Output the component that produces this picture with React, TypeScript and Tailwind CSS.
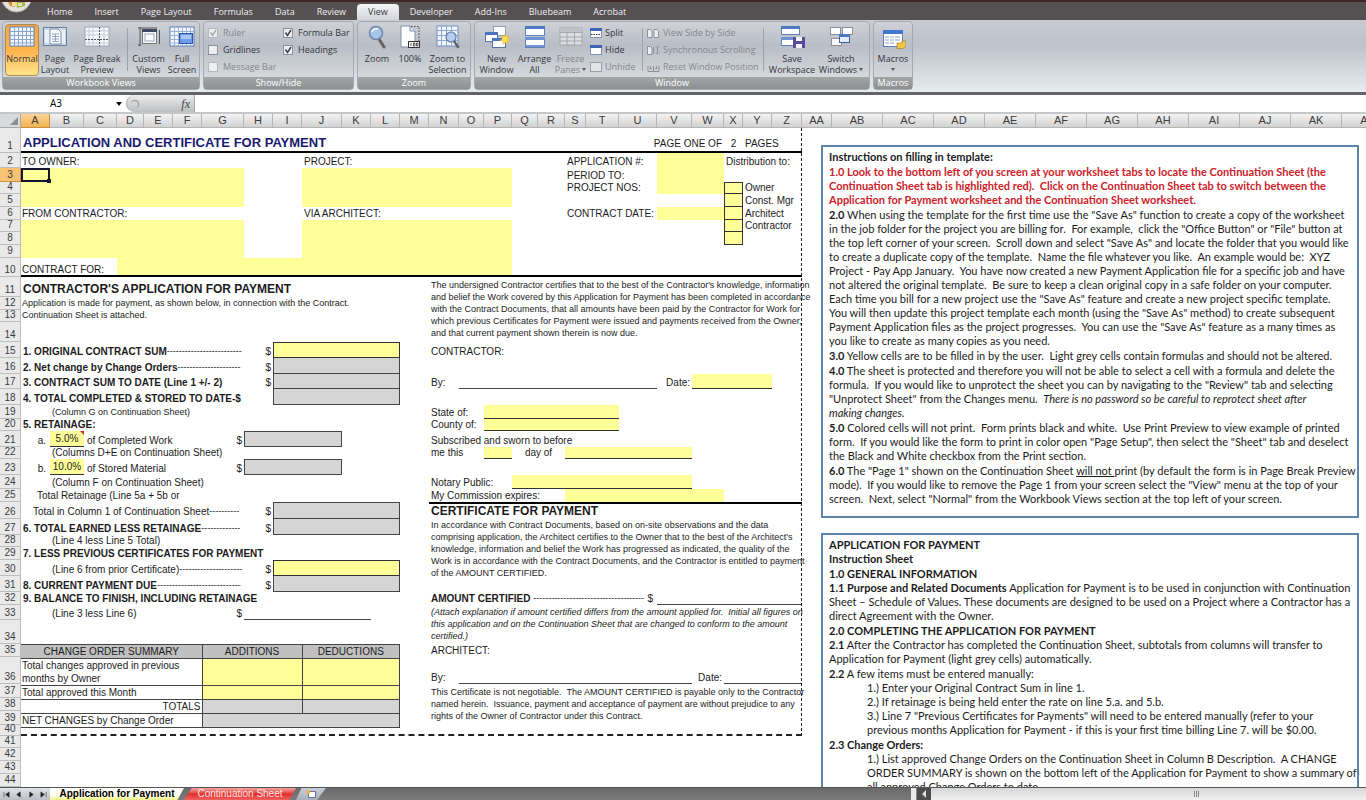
import React, { useState } from "react";

const COLUMNS: [string, number][] = [
  ["A", 29], ["B", 34], ["C", 33], ["D", 27], ["E", 29], ["F", 29], ["G", 42], ["H", 29], ["I", 29],
  ["J", 40], ["K", 29], ["L", 29], ["M", 29], ["N", 30], ["O", 25], ["P", 28], ["Q", 26], ["R", 27],
  ["S", 21], ["T", 33], ["U", 38], ["V", 35], ["W", 32], ["X", 19], ["Y", 29], ["Z", 30], ["AA", 30],
  ["AB", 51], ["AC", 51], ["AD", 51], ["AE", 51], ["AF", 51], ["AG", 51], ["AH", 51], ["AI", 51],
  ["AJ", 51], ["AK", 51], ["AL", 51],
];

const ROWS = [
  25, 15, 14, 12, 13, 13, 12, 13, 13, 19, 20, 13, 12, 20, 16, 16, 15, 16, 14, 12, 16, 12, 16, 14, 13,
  17, 16, 12, 13, 16, 16, 13, 15, 24, 13, 27, 14, 13, 14, 11, 12, 13, 13, 13,
];

// "A3:G5" -> grid lines, +2 because of the heading row and column
const area = (ref: string) => {
  const [from, to = from] = ref.split(":");
  const col = (s: string) => COLUMNS.findIndex(([name]) => name === s.replace(/\d/g, "")) + 2;
  const row = (s: string) => Number(s.replace(/\D/g, "")) + 1;
  return { gridColumn: `${col(from)} / ${col(to) + 1}`, gridRow: `${row(from)} / ${row(to) + 1}` };
};

const Cell = ({ at, className = "", children }: any) => (
  <div style={area(at)} className={`flex items-end whitespace-pre leading-[13px] ${className}`}>
    {children}
  </div>
);

// yellow cells, filled in by the user
const Field = ({ at, label, value = "", className = "" }: any) => (
  <input
    aria-label={label}
    defaultValue={value}
    style={area(at)}
    className={`h-full w-full min-w-0 border-[#333] bg-[#ffff99] text-center outline-none ${className}`}
  />
);

const Lines = ({ text }: any) =>
  text.split("\n").map((line: any, i: any) => (
    <React.Fragment key={i}>
      {i > 0 && <br />}
      {line}
    </React.Fragment>
  ));

const Note = ({ at, className = "", lines }: any) => (
  <p style={area(at)} className={`whitespace-pre pl-0.5 text-[9px] leading-3 ${className}`}>
    <Lines text={lines.join("\n")} />
  </p>
);

const Dashes = ({ count }: any) => <span className="text-[9px] font-normal">{"-".repeat(count)}</span>;

/* ---------- ribbon icons ---------- */

const Svg = ({ children, className = "h-6 w-[26px]" }: any) => (
  <svg viewBox="0 0 26 24" className={className} fill="none" aria-hidden="true">
    {children}
  </svg>
);

const GridIcon = () => (
  <Svg>
    <rect x="1" y="2" width="24" height="19" fill="#f4f8ff" stroke="#5b7fb5" />
    <path d="M5.5 2v19M9.5 2v19M13.5 2v19M17.5 2v19M21.5 2v19M1 6.5h24M1 10.5h24M1 14.5h24M1 18h24" stroke="#8aa5cf" />
  </Svg>
);

const PageLayoutIcon = () => (
  <Svg>
    <rect x="1.5" y="2.5" width="23" height="18" fill="#c9d9ee" stroke="#6d7f99" />
    <path d="M3 5h20v13H3z" fill="#e9f0f8" />
    <path d="M8 4h8l3 3v12H8z" fill="#fff" stroke="#7b8ca5" />
    <path d="M10 9h7M10 11.500h7M10 14h7M10 16.500h7M13.500 9v8" stroke="#8ea6c6" />
  </Svg>
);

const PageBreakIcon = () => (
  <Svg>
    <rect x="1" y="2" width="24" height="19" fill="#f7f9fc" stroke="#9aa5b5" />
    <path d="M5 2v19M9 2v19M20 2v19M1 6h24M1 10h24M1 18h24" stroke="#c3cddb" />
    <path d="M15.500 2v19M1 14.500h24" stroke="#555" strokeDasharray="2 1" />
  </Svg>
);

const CustomViewsIcon = () => (
  <Svg>
    <path d="M2 3h19M4 2v19M2 20h3M23.500 5v14" stroke="#555" />
    <rect x="6.500" y="6.500" width="14" height="12" fill="#f5f7fa" stroke="#777" />
    <path d="M6 4h15v3H6z" fill="#3d4a5c" />
    <rect x="9" y="9" width="9" height="7" fill="#fff" stroke="#9aa7b8" />
  </Svg>
);

const FullScreenIcon = () => (
  <Svg>
    <rect x="1" y="2" width="24" height="19" fill="#f4f8ff" stroke="#5b7fb5" />
    <path d="M5.500 2v19M9.500 2v19M13.500 2v19M17.500 2v19M21.500 2v19M1 6.500h24M1 10.500h24M1 14.500h24M1 18h24" stroke="#9db3d6" />
    <rect x="10.500" y="8.500" width="13" height="10" fill="#6f9ce6" stroke="#2f55a4" />
    <path d="M12 10h10v4H12z" fill="#a9c6f5" />
  </Svg>
);

const ZoomIcon = () => (
  <Svg>
    <path d="M15 14l5 8" stroke="#6d625c" strokeWidth="3" strokeLinecap="round" />
    <circle cx="12" cy="8" r="6.500" fill="#a9c4ea" stroke="#7186a8" strokeWidth="1.500" />
    <path d="M8 7a4.500 4.500 0 0 1 6-3" stroke="#fff" strokeWidth="1.500" />
  </Svg>
);

const HundredIcon = () => (
  <Svg>
    <path d="M4 1h9l5 5v16H4z" fill="#fff" stroke="#8292ab" />
    <path d="M13 1v5h5" stroke="#8292ab" fill="#dbe5f3" />
    <path d="M14 1.500h8v15" stroke="#444" strokeDasharray="1.500 1.500" />
    <rect x="11.500" y="16.500" width="11" height="6" fill="#fff" stroke="#333" />
    <path d="M14 18v3M16.500 18v3h1.500v-3zM19.500 18v3h1.500v-3z" stroke="#333" strokeWidth=".8" />
  </Svg>
);

const ZoomSelectionIcon = () => (
  <Svg>
    <rect x="2" y="1" width="21" height="20" fill="#f0f5fd" stroke="#6f8dbd" />
    <path d="M6.500 1v20M11.500 1v20M16.500 1v20M2 5.500h21M2 10.500h21M2 15.500h21" stroke="#8fa9d1" />
    <path d="M19 16l4 6" stroke="#5d6470" strokeWidth="2.500" strokeLinecap="round" />
    <circle cx="16" cy="12" r="5" fill="#b6cdf0" stroke="#637ba3" strokeWidth="1.200" />
  </Svg>
);

const NewWindowIcon = () => (
  <Svg>
    <rect x="9.500" y="1.500" width="12" height="9" fill="#fff" stroke="#8f9fb8" />
    <rect x="1.500" y="7.500" width="12" height="9" fill="#fff" stroke="#5673a8" />
    <path d="M1 7h13v3H1z" fill="#4c74bd" />
    <rect x="8.500" y="13.500" width="13" height="9" fill="#fff" stroke="#5673a8" />
    <path d="M8 13h14v3H8z" fill="#4c74bd" />
    <path d="M21 9l1 3 3-1-1.500 3L26 15.500 23 16l.5 3-2.500-2-2 2.500V16l-3-.5 2.500-1.500L17 11l3 1z" fill="#ffe14a" stroke="#e0b520" strokeWidth=".5" />
  </Svg>
);

const ArrangeIcon = () => (
  <Svg>
    <rect x="3.500" y="1.500" width="19" height="9" fill="#fff" stroke="#5f81b9" />
    <path d="M3 1h20v3H3z" fill="#4f78c2" />
    <rect x="3.500" y="12.500" width="19" height="10" fill="#fff" stroke="#5f81b9" />
    <path d="M3 12h20v3H3zM3 20h20v2H3z" fill="#6d93d4" />
  </Svg>
);

const FreezeIcon = () => (
  <Svg>
    <rect x="2" y="3" width="22" height="17" fill="#dcdee1" stroke="#a4a7ad" />
    <path d="M2 7.500h22M2 12h22M2 16h22M9 3v17M16.500 3v17" stroke="#a4a7ad" />
    <path d="M2 3h22v4H2z" fill="#bfc2c7" />
  </Svg>
);

const SaveWorkspaceIcon = () => (
  <Svg>
    <rect x="2.500" y="1.500" width="18" height="8" fill="#fff" stroke="#5f81b9" />
    <path d="M2 1h19v3H2z" fill="#4f78c2" />
    <rect x="2.500" y="12.500" width="18" height="8" fill="#fff" stroke="#5f81b9" />
    <path d="M2 12h19v3H2z" fill="#6d93d4" />
    <rect x="14" y="12" width="12" height="11" fill="#5a4b9c" />
    <path d="M17 12h6v4h-6zM17 19h6v4h-6z" fill="#f3f2fa" />
  </Svg>
);

const SwitchIcon = () => (
  <Svg>
    <rect x="2.500" y="2.500" width="10" height="7" fill="#fff" stroke="#8a8f98" />
    <rect x="14.500" y="2.500" width="10" height="7" fill="#fff" stroke="#8a8f98" />
    <rect x="3.500" y="13.500" width="10" height="7" fill="#fff" stroke="#8a8f98" />
    <rect x="11.500" y="9.500" width="10" height="8" fill="#e4edfb" stroke="#3f5f9f" />
    <path d="M11 9h11v3H11z" fill="#4f78c2" />
  </Svg>
);

const MacrosIcon = () => (
  <Svg>
    <rect x="3.500" y="5.500" width="19" height="16" fill="#fff" stroke="#5f81b9" />
    <path d="M3 5h20v4H3z" fill="#4176d3" />
    <path d="M5 12h4M10 12h4M15 12h5M5 15h4M10 15h4M15 15h5M5 18h4M10 18h4" stroke="#8ba3c7" />
    <path d="M17 18h5v-2h4v5l-3 2.500h-6z" fill="#efc64a" stroke="#a8811d" strokeWidth=".7" />
  </Svg>
);

const PaneIcon = ({ kind }: any) => (
  <svg viewBox="0 0 12 10" className="h-2.5 w-3 shrink-0" fill="none" aria-hidden="true">
    <rect x=".5" y=".5" width="11" height="9" fill={kind === "unhide" ? "#e1e3e6" : "#fff"} stroke={kind === "unhide" ? "#999da5" : "#7f95bd"} />
    {kind !== "unhide" && <path d="M0 0h12v3H0z" fill="#3c66b5" />}
    {kind === "split" && <path d="M1 6.500h10" stroke="#333" strokeDasharray="1.500 1" />}
  </svg>
);

const PairIcon = ({ kind }: any) => (
  <svg viewBox="0 0 13 10" className="h-2.5 w-[13px] shrink-0" fill="none" stroke="#8f9299" aria-hidden="true">
    {kind === "reset" ? (
      <path d="M1 4v5.500h11V4M6.500 4v5.500M2.500 6.500h2.500M8 6.500h2.500M3.500 4v3M9.500 4v3" />
    ) : (
      <>
        <path d="M.5 1.500h3l1.500 1.500v6.500H.5z" fill="#eceded" />
        <path d={kind === "sync" ? "M10.500 1v8M9 2.500l1.500-1.500L12 2.500M9 7.500l1.500 1.500L12 7.500M6.500 2v7" : "M7 1.500h3l1.500 1.500v6.500H7z"} fill="#eceded" />
      </>
    )}
  </svg>
);

/* ---------- ribbon ---------- */

const RibbonGroup = ({ title, children, className = "" }: any) => (
  <section
    aria-label={title}
    className={`flex flex-col rounded-sm border border-[#a5a9af] bg-linear-to-b from-[#ced1d7] via-[#b9bdc6] via-35% to-[#dfe4e5] ${className}`}
  >
    <div className="flex h-[55px] px-0.5">{children}</div>
    <div className="h-3 bg-linear-to-b from-[#a3a6a7] to-[#8e9192] text-center leading-[11px] text-white">{title}</div>
  </section>
);

const BigButton = ({ icon, lines, className = "", active, disabled, arrow }: any) => (
  <button
    disabled={disabled}
    className={`mt-0.5 flex h-[52px] shrink-0 flex-col items-center whitespace-nowrap rounded-sm border leading-[11px] ${
      active ? "border-[#b08a4e] bg-linear-to-b from-[#f0a94d] via-[#ffb34d] to-[#ffe48a]" : "border-transparent"
    } ${disabled ? "text-[#85888e]" : ""} ${className}`}
  >
    <span className="mb-1">{icon}</span>
    {lines.map((line: any, i: any) => (
      <span key={line} className="flex items-center gap-0.5">
        {line}
        {arrow && i === lines.length - 1 && lines.length > 1 && <Arrow />}
      </span>
    ))}
    {arrow && lines.length === 1 && <span className="pt-1"><Arrow /></span>}
  </button>
);

const Arrow = () => (
  <svg viewBox="0 0 4 3" className="h-[3px] w-1" aria-hidden="true">
    <path d="M0 0h4L2 3z" fill="#555" />
  </svg>
);

const CheckItem = ({ label, checked, disabled }: any) => {
  const [on, setOn] = useState(!!checked);
  return (
    <label className={`flex h-[17px] items-center gap-[5px] whitespace-nowrap ${disabled ? "text-[#85888e]" : ""}`}>
      <span className="grid size-2.5">
        <input
          type="checkbox"
          checked={on}
          disabled={disabled}
          onChange={() => setOn(!on)}
          className="col-start-1 row-start-1 size-2.5 appearance-none border border-[#8d9199] bg-[#eceeef] disabled:border-[#b3b6bb]"
        />
        {on && (
          <svg viewBox="0 0 10 10" className="pointer-events-none col-start-1 row-start-1 size-2.5" fill="none" aria-hidden="true">
            <path d="M2.500 4.500l2 3L8 2" stroke={disabled ? "#a6a9ae" : "#333b4d"} strokeWidth="1.400" />
          </svg>
        )}
      </span>
      {label}
    </label>
  );
};

const SmallButton = ({ icon, label, disabled }: any) => (
  <button disabled={disabled} className={`flex h-[17px] items-center gap-[3px] whitespace-nowrap ${disabled ? "text-[#85888e]" : ""}`}>
    {icon}
    {label}
  </button>
);

const Separator = () => <div className="mx-1 my-1.5 w-px shrink-0 bg-[#9da1a8]" />;

const TABS = ["Home", "Insert", "Page Layout", "Formulas", "Data", "Review", "View", "Developer", "Add-Ins", "Bluebeam", "Acrobat"];

const Ribbon = () => (
  <header className="shrink-0 font-['Open_Sans',sans-serif] text-[9px] text-[#33363c]">
    <nav className="flex h-5 border-t-2 border-[#452426] bg-[#555153]">
      <svg viewBox="0 0 36 18" className="h-[18px] w-9 shrink-0" aria-hidden="true">
        <circle cx="16.500" cy="-5" r="15" fill="#e4e2dc" stroke="#b6b3ad" />
        <path d="M8 0h7v5l-5-1z" fill="#e08a3c" />
        <path d="M16 -2h9v6l-8 2z" fill="#a3b84a" />
        <path d="M12 0h5v4h-5z" fill="#f0dba0" />
        <path d="M18 1h4v3h-4z" fill="#dfe8a8" />
      </svg>
      {TABS.map((tab) => (
        <button
          key={tab}
          className={`mt-0.5 px-[11px] ${tab === "View" ? "rounded-t-sm bg-linear-to-b from-[#f4f5f6] to-[#d2d5da]" : "text-[#eeeeee]"}`}
        >
          {tab}
        </button>
      ))}
    </nav>
    <div className="flex gap-[3px] border-b-[3px] border-[#626466] bg-linear-to-b from-[#c6cad1] via-[#bec2cb] via-35% to-[#e6eded] px-0.5 pb-0.5 pt-px">
      <RibbonGroup title="Workbook Views" className="w-[198px]">
        <BigButton active icon={<GridIcon />} lines={["Normal"]} className="w-[34px]" />
        <BigButton icon={<PageLayoutIcon />} lines={["Page", "Layout"]} className="w-[32px]" />
        <BigButton icon={<PageBreakIcon />} lines={["Page Break", "Preview"]} className="w-[52px]" />
        <Separator />
        <BigButton icon={<CustomViewsIcon />} lines={["Custom", "Views"]} className="w-[33px]" />
        <BigButton icon={<FullScreenIcon />} lines={["Full", "Screen"]} className="w-[34px]" />
      </RibbonGroup>
      <RibbonGroup title="Show/Hide" className="w-[151px]">
        <div className="grid grid-cols-[75px_auto] content-start pl-0.5 pt-0.5">
          <CheckItem label="Ruler" checked disabled />
          <CheckItem label="Formula Bar" checked />
          <CheckItem label="Gridlines" />
          <CheckItem label="Headings" checked />
          <CheckItem label="Message Bar" disabled />
        </div>
      </RibbonGroup>
      <RibbonGroup title="Zoom" className="w-[114px]">
        <BigButton icon={<ZoomIcon />} lines={["Zoom"]} className="w-[34px]" />
        <BigButton icon={<HundredIcon />} lines={["100%"]} className="w-[32px]" />
        <BigButton icon={<ZoomSelectionIcon />} lines={["Zoom to", "Selection"]} className="w-[43px]" />
      </RibbonGroup>
      <RibbonGroup title="Window" className="w-[396px]">
        <BigButton icon={<NewWindowIcon />} lines={["New", "Window"]} className="w-[39px]" />
        <BigButton icon={<ArrangeIcon />} lines={["Arrange", "All"]} className="w-[37px]" />
        <BigButton icon={<FreezeIcon />} lines={["Freeze", "Panes"]} className="w-[35px]" disabled arrow />
        <div className="w-[50px] shrink-0 pl-0.5 pt-0.5">
          <SmallButton icon={<PaneIcon kind="split" />} label="Split" />
          <SmallButton icon={<PaneIcon kind="hide" />} label="Hide" />
          <SmallButton icon={<PaneIcon kind="unhide" />} label="Unhide" disabled />
        </div>
        <Separator />
        <div className="w-[112px] shrink-0 pt-0.5">
          <SmallButton icon={<PairIcon kind="side" />} label="View Side by Side" disabled />
          <SmallButton icon={<PairIcon kind="sync" />} label="Synchronous Scrolling" disabled />
          <SmallButton icon={<PairIcon kind="reset" />} label="Reset Window Position" disabled />
        </div>
        <Separator />
        <BigButton icon={<SaveWorkspaceIcon />} lines={["Save", "Workspace"]} className="w-[48px]" />
        <BigButton icon={<SwitchIcon />} lines={["Switch", "Windows"]} className="w-[50px]" arrow />
      </RibbonGroup>
      <RibbonGroup title="Macros" className="w-10">
        <BigButton icon={<MacrosIcon />} lines={["Macros"]} className="w-[34px]" arrow />
      </RibbonGroup>
    </div>
  </header>
);

const FormulaBar = () => (
  <div className="flex h-[19px] shrink-0 items-stretch border-b-2 border-[#c6c7c9] bg-white font-['Open_Sans',sans-serif] text-[10px]">
    <input aria-label="Name Box" defaultValue="A3" className="w-28 text-center outline-none" />
    <button aria-label="Names" className="flex w-3.5 items-center justify-center">
      <svg viewBox="0 0 6 4" className="h-1 w-1.5" aria-hidden="true"><path d="M0 0h6L3 4z" fill="#111" /></svg>
    </button>
    <div className="flex w-[69px] items-center justify-between rounded-l-full border-l border-r border-[#a5a7aa] bg-linear-to-b from-[#ececec] to-[#bcbec0] px-1">
      <span className="size-2 rounded-full border-r border-t border-[#8d9093]" />
      <button aria-label="Insert Function" className="font-['Liberation_Serif',serif] text-[12px] italic leading-none text-[#444]">
        fx
      </button>
    </div>
    <input aria-label="Formula" className="min-w-0 flex-1 outline-none" />
  </div>
);

/* ---------- sheet ---------- */

const GREY = "border border-[#444] bg-[#d5d5d5]";

const amountRows = [
  { row: 16, text: "2. Net change by Change Orders", dashes: 21 },
  { row: 17, text: "3. CONTRACT SUM TO DATE (Line 1 +/- 2)", dashes: 0 },
];

const PaymentForm = () => (
  <>
    <Cell at="A1:U1" className="border-b-2 border-black pb-0.5 pl-0.5 text-[13px] font-bold text-[#191970]">
      APPLICATION AND CERTIFICATE FOR PAYMENT
    </Cell>
    <Cell at="U1:W1" className="justify-end border-b-2 border-black pb-px pr-0.5">PAGE ONE OF</Cell>
    <Cell at="X1" className="justify-center border-b-2 border-black pb-px">2</Cell>
    <Cell at="Y1:Z1" className="border-b-2 border-black pb-px pl-0.5">PAGES</Cell>

    <Cell at="A2:G2" className="pl-px">TO OWNER:</Cell>
    <Cell at="J2:P2" className="pl-0.5">PROJECT:</Cell>
    <Field at="A3:G5" label="Owner" />
    <Field at="J3:P5" label="Project" />
    <Cell at="A6:G6" className="pl-px">FROM CONTRACTOR:</Cell>
    <Cell at="J6:P6" className="pl-0.5">VIA ARCHITECT:</Cell>
    <Field at="A7:G9" label="From contractor" />
    <Field at="J7:P9" label="Via architect" />
    <Cell at="A10:C10" className="pb-px pl-px">CONTRACT FOR:</Cell>
    <Field at="D10:P10" label="Contract for" />
    <Cell at="A10:Z10" className="pointer-events-none border-b-2 border-black" />

    <Cell at="S2:U2" className="pl-0.5">APPLICATION #:</Cell>
    <Cell at="S3:U3" className="pl-0.5">PERIOD TO:</Cell>
    <Cell at="S4:U4" className="pl-0.5">PROJECT NOS:</Cell>
    <Cell at="S6:U6" className="pl-0.5">CONTRACT DATE:</Cell>
    <Field at="V2:W2" label="Application number" />
    <Field at="V3:W3" label="Period to" />
    <Field at="V4:W4" label="Project numbers" />
    <Field at="V6:W6" label="Contract date" />
    <Cell at="X2:Z2" className="pl-0.5">Distribution to:</Cell>
    <Field at="X4" label="Owner copy" className="border" />
    <Field at="X5" label="Construction manager copy" className="border border-t-0" />
    <Field at="X6" label="Architect copy" className="border border-t-0" />
    <Field at="X7" label="Contractor copy" className="border border-t-0" />
    <Field at="X8" label="Other copy" className="border border-t-0" />
    <Cell at="Y4:Z4" className="pl-0.5">Owner</Cell>
    <Cell at="Y5:Z5" className="pl-0.5">Const. Mgr</Cell>
    <Cell at="Y6:Z6" className="pl-0.5">Architect</Cell>
    <Cell at="Y7:Z7" className="pl-0.5">Contractor</Cell>

    {/* left half */}
    <Cell at="A11:L11" className="pb-px pl-0.5 text-[12px] font-bold">CONTRACTOR'S APPLICATION FOR PAYMENT</Cell>
    <Cell at="A12:L12" className="pl-px text-[9px]">Application is made for payment, as shown below, in connection with the Contract.</Cell>
    <Cell at="A13:L13" className="pl-px text-[9px]">Continuation Sheet is attached.</Cell>

    <Cell at="A15:G15" className="pl-0.5 font-bold">1. ORIGINAL CONTRACT SUM<Dashes count={25} /></Cell>
    <Cell at="H15" className="justify-end pr-0.5">$</Cell>
    <Field at="I15:L15" label="Original contract sum" className="border" />
    {amountRows.map(({ row, text, dashes }) => (
      <React.Fragment key={row}>
        <Cell at={`A${row}:G${row}`} className="pl-0.5 font-bold">{text}<Dashes count={dashes} /></Cell>
        <Cell at={`H${row}`} className="justify-end pr-0.5">$</Cell>
        <Cell at={`I${row}:L${row}`} className={`${GREY} border-t-0`} />
      </React.Fragment>
    ))}
    <Cell at="A18:H18" className="pl-0.5 font-bold">4. TOTAL COMPLETED &amp; STORED TO DATE-$</Cell>
    <Cell at="I18:L18" className={`${GREY} border-t-0`} />
    <Cell at="B19:G19" className="pl-0.5 text-[9px]">(Column G on Continuation Sheet)</Cell>
    <Cell at="A20:G20" className="pl-0.5 font-bold">5. RETAINAGE:</Cell>

    <Cell at="A21" className="justify-end pr-1">a.</Cell>
    <Field at="B21" label="Completed work rate" value="5.0%" className="border-b" />
    <Cell at="B21" className="pointer-events-none items-start justify-end">
      <span className="mb-auto size-1 bg-[#c8321e] [clip-path:polygon(0_0,100%_0,100%_100%)]" />
    </Cell>
    <Cell at="C21:F21" className="pl-[3px]">of Completed Work</Cell>
    <Cell at="G21" className="justify-end pr-0.5">$</Cell>
    <Cell at="H21:J21" className={GREY} />
    <Cell at="B22:G22" className="pl-0.5">(Columns D+E on Continuation Sheet)</Cell>
    <Cell at="A23" className="justify-end pr-1">b.</Cell>
    <Field at="B23" label="Stored material rate" value="10.0%" className="border-b" />
    <Cell at="C23:F23" className="pl-[3px]">of Stored Material</Cell>
    <Cell at="G23" className="justify-end pr-0.5">$</Cell>
    <Cell at="H23:J23" className={GREY} />
    <Cell at="B24:G24" className="pl-0.5">(Column F on Continuation Sheet)</Cell>
    <Cell at="A25:G25" className="pl-4">Total Retainage (Line 5a + 5b or</Cell>
    <Cell at="A26:G26" className="pb-px pl-3">Total in Column 1 of Continuation Sheet<Dashes count={10} /></Cell>
    <Cell at="H26" className="justify-end pb-px pr-0.5">$</Cell>
    <Cell at="I26:L26" className={GREY} />
    <Cell at="A27:G27" className="pl-0.5 font-bold">6. TOTAL EARNED LESS RETAINAGE<Dashes count={13} /></Cell>
    <Cell at="H27" className="justify-end pr-0.5">$</Cell>
    <Cell at="I27:L27" className={`${GREY} border-t-0`} />
    <Cell at="B28:G28" className="pl-0.5">(Line 4 less Line 5 Total)</Cell>
    <Cell at="A29:L29" className="pl-0.5 font-bold">7. LESS PREVIOUS CERTIFICATES FOR PAYMENT</Cell>
    <Cell at="B30:G30" className="pl-0.5">(Line 6 from prior Certificate)<Dashes count={21} /></Cell>
    <Cell at="H30" className="justify-end pr-0.5">$</Cell>
    <Field at="I30:L30" label="Previous certificates" className="border" />
    <Cell at="A31:G31" className="pl-0.5 font-bold">8. CURRENT PAYMENT DUE<Dashes count={28} /></Cell>
    <Cell at="H31" className="justify-end pr-0.5">$</Cell>
    <Cell at="I31:L31" className={`${GREY} border-t-0`} />
    <Cell at="A32:L32" className="pl-0.5 font-bold">9. BALANCE TO FINISH, INCLUDING RETAINAGE</Cell>
    <Cell at="B33:F33" className="pl-0.5">(Line 3 less Line 6)</Cell>
    <Cell at="G33" className="justify-end pr-0.5">$</Cell>
    <Cell at="H33:K33" className="border-b border-[#444]" />

    <table style={area("A35:L39")} className="h-full w-full table-fixed border-collapse leading-[13px]">
      <colgroup>
        <col className="w-[181px]" />
        <col className="w-[100px]" />
        <col />
      </colgroup>
      <thead>
        <tr className="h-[13px] bg-[#c0c0c0] [&>th]:border [&>th]:border-[#444] [&>th]:p-0 [&>th]:font-normal">
          <th className="border-l-0!">CHANGE ORDER SUMMARY</th>
          <th>ADDITIONS</th>
          <th>DEDUCTIONS</th>
        </tr>
      </thead>
      <tbody className="[&_td]:border [&_td]:border-[#444] [&_td]:p-0">
        <tr className="h-[27px]">
          <td className="border-l-0! pl-px!">Total changes approved in previous<br />months by Owner</td>
          <td className="bg-[#ffff99]" />
          <td className="bg-[#ffff99]" />
        </tr>
        <tr className="h-[14px]">
          <td className="border-l-0! pl-px!">Total approved this Month</td>
          <td className="bg-[#ffff99]" />
          <td className="bg-[#ffff99]" />
        </tr>
        <tr className="h-[13px]">
          <td className="border-l-0! pr-px! text-right">TOTALS</td>
          <td className="bg-[#d5d5d5]" />
          <td className="bg-[#d5d5d5]" />
        </tr>
        <tr className="h-[14px]">
          <td className="border-l-0! pl-px!">NET CHANGES by Change Order</td>
          <td colSpan={2} className="bg-[#d5d5d5]" />
        </tr>
      </tbody>
    </table>

    {/* right half */}
    <Note
      at="N11:Z14"
      className="pt-0.5"
      lines={[
        "The undersigned Contractor certifies that to the best of the Contractor's knowledge, information",
        "and belief the Work covered by this Application for Payment has been completed in accordance",
        "with the Contract Documents, that all amounts have been paid by the Contractor for Work for",
        "which previous Certificates for Payment were issued and payments received from the Owner,",
        "and that current payment shown therein is now due.",
      ]}
    />
    <Cell at="N15:R15" className="pl-0.5">CONTRACTOR:</Cell>
    <Cell at="N17" className="pl-0.5">By:</Cell>
    <Cell at="O17:U17" className="border-b border-[#444]" />
    <Cell at="U17:V17" className="justify-end pr-0.5">Date:</Cell>
    <Field at="W17:Y17" label="Contractor date" className="border-b" />
    <Cell at="N19:O19" className="pl-0.5">State of:</Cell>
    <Field at="P19:T19" label="State" className="border-b" />
    <Cell at="N20:O20" className="pl-0.5">County of:</Cell>
    <Field at="P20:T20" label="County" className="border-b" />
    <Cell at="N21:U21" className="pl-0.5">Subscribed and sworn to before</Cell>
    <Cell at="N22:O22" className="pl-0.5">me this</Cell>
    <Field at="P22" label="Day" className="border-b" />
    <Cell at="Q22:R22" className="justify-center">day of</Cell>
    <Field at="S22:V22" label="Month" className="border-b" />
    <Cell at="N24:P24" className="pl-0.5">Notary Public:</Cell>
    <Field at="Q24:V24" label="Notary public" className="border-b" />
    <Cell at="N25:R25" className="pl-0.5">My Commission expires:</Cell>
    <Field at="S25:W25" label="Commission expires" />
    <Cell at="N26:Z26" className="border-t-2 border-black pb-px pl-0.5 text-[12px] font-bold">CERTIFICATE FOR PAYMENT</Cell>
    <Note
      at="N27:Z31"
      lines={[
        "In accordance with Contract Documents, based on on-site observations and the data",
        "comprising application, the Architect certifies to the Owner that to the best of the Architect's",
        "knowledge, information and belief the Work has progressed as indicated, the quality of the",
        "Work is in accordance with the Contract Documents, and the Contractor is entitled to payment",
        "of the AMOUNT CERTIFIED.",
      ]}
    />
    <Cell at="N32:T32" className="pl-0.5 font-bold">AMOUNT CERTIFIED <Dashes count={37} /></Cell>
    <Cell at="U32" className="justify-end pr-1">$</Cell>
    <Cell at="V32:Z32" className="border-b border-[#444]" />
    <Note
      at="N33:Z34"
      className="pt-px italic"
      lines={[
        "(Attach explanation if amount certified differs from the amount applied for.  Initial all figures on",
        "this application and on the Continuation Sheet that are changed to conform to the amount",
        "certified.)",
      ]}
    />
    <Cell at="N35:R35" className="pl-0.5">ARCHITECT:</Cell>
    <Cell at="N36" className="pl-0.5">By:</Cell>
    <Cell at="O36:V36" className="border-b border-[#444]" />
    <Cell at="W36" className="justify-end pr-0.5">Date:</Cell>
    <Cell at="X36:Z36" className="border-b border-[#444]" />
    <Note
      at="N37:Z40"
      className="pt-0.5"
      lines={[
        "This Certificate is not negotiable.  The AMOUNT CERTIFIED is payable only to the Contractor",
        "named herein.  Issuance, payment and acceptance of payment are without prejudice to any",
        "rights of the Owner of Contractor under this Contract.",
      ]}
    />

    {/* print area */}
    <Cell at="A1:Z40" className="pointer-events-none border-b-2 border-r border-dashed border-[#222]" />
    {/* active cell */}
    <Cell at="A3" className="pointer-events-none relative border-2 border-[#15152e]">
      <span className="absolute -bottom-[3px] -right-[3px] size-1 bg-[#15152e]" />
    </Cell>
  </>
);

const Instructions = () => (
  <div style={area("AA1:AL44")} className="flex flex-col gap-[15px] overflow-hidden pl-[19px] pt-[17px] font-['Lato',sans-serif] text-[11px] leading-[14px]">
    <section className="w-[538px] shrink-0 space-y-px whitespace-pre border-2 border-[#5b85a9] bg-white pb-2.5 pl-1.5 pt-[3px]">
      <h2 className="font-bold">Instructions on filling in template:</h2>
      <p className="font-bold text-[#cc2229]">
        <Lines
          text={`1.0 Look to the bottom left of you screen at your worksheet tabs to locate the Continuation Sheet (the
Continuation Sheet tab is highlighted red).  Click on the Continuation Sheet tab to switch between the
Application for Payment worksheet and the Continuation Sheet worksheet.`}
        />
      </p>
      <p>
        <b>2.0</b>
        <Lines
          text={` When using the template for the first time use the "Save As" function to create a copy of the worksheet
in the job folder for the project you are billing for.  For example,  click the "Office Button" or "File" button at
the top left corner of your screen.  Scroll down and select "Save As" and locate the folder that you would like
to create a duplicate copy of the template.  Name the file whatever you like.  An example would be:  XYZ
Project - Pay App January.  You have now created a new Payment Application file for a specific job and have
not altered the original template.  Be sure to keep a clean original copy in a safe folder on your computer.
Each time you bill for a new project use the "Save As" feature and create a new project specific template.
You will then update this project template each month (using the "Save As" method) to create subsequent
Payment Application files as the project progresses.  You can use the "Save As" feature as a many times as
you like to create as many copies as you need.`}
        />
      </p>
      <p>
        <b>3.0</b>
        {` Yellow cells are to be filled in by the user.  Light grey cells contain formulas and should not be altered.`}
      </p>
      <p>
        <b>4.0</b>
        <Lines
          text={` The sheet is protected and therefore you will not be able to select a cell with a formula and delete the
formula.  If you would like to unprotect the sheet you can by navigating to the "Review" tab and selecting
"Unprotect Sheet" from the Changes menu.  `}
        />
        <i>
          <Lines text={`There is no password so be careful to reprotect sheet after
making changes.`} />
        </i>
      </p>
      <p>
        <b>5.0</b>
        <Lines
          text={` Colored cells will not print.  Form prints black and white.  Use Print Preview to view example of printed
form.  If you would like the form to print in color open "Page Setup", then select the "Sheet" tab and deselect
the Black and White checkbox from the Print section.`}
        />
      </p>
      <p>
        <b>6.0</b>
        {` The "Page 1" shown on the Continuation Sheet `}
        <u>will not </u>
        <Lines
          text={`print (by default the form is in Page Break Preview
mode).  If you would like to remove the Page 1 from your screen select the "View" menu at the top of your
screen.  Next, select "Normal" from the Workbook Views section at the top left of your screen.`}
        />
      </p>
    </section>

    <section className="w-[538px] shrink-0 space-y-px whitespace-pre border-2 border-[#5b85a9] bg-white pb-2.5 pl-1.5 pt-[3px]">
      <h2 className="font-bold"><Lines text={"APPLICATION FOR PAYMENT\nInstruction Sheet"} /></h2>
      <p>
        <b><Lines text={"1.0 GENERAL INFORMATION\n1.1 Purpose and Related Documents"} /></b>
        <Lines
          text={` Application for Payment is to be used in conjunction with Continuation
Sheet – Schedule of Values. These documents are designed to be used on a Project where a Contractor has a
direct Agreement with the Owner.`}
        />
      </p>
      <p>
        <b><Lines text={"2.0 COMPLETING THE APPLICATION FOR PAYMENT\n2.1"} /></b>
        <Lines
          text={` After the Contractor has completed the Continuation Sheet, subtotals from columns will transfer to
Application for Payment (light grey cells) automatically.`}
        />
      </p>
      <div>
        <p><b>2.2</b> A few items must be entered manually:</p>
        <ul className="pl-[38px]">
          <li>1.) Enter your Original Contract Sum in line 1.</li>
          <li>2.) If retainage is being held enter the rate on line 5.a. and 5.b.</li>
          <li>
            <Lines
              text={`3.) Line 7 "Previous Certificates for Payments" will need to be entered manually (refer to your
previous months Application for Payment - if this is your first time billing Line 7. will be $0.00.`}
            />
          </li>
        </ul>
      </div>
      <div>
        <p className="font-bold">2.3 Change Orders:</p>
        <ul className="pl-[38px]">
          <li>
            <Lines
              text={`1.) List approved Change Orders on the Continuation Sheet in Column B Description.  A CHANGE
ORDER SUMMARY is shown on the bottom left of the Application for Payment to show a summary of
all approved Change Orders to date.`}
            />
          </li>
        </ul>
      </div>
    </section>
  </div>
);

const Sheet = () => {
  const gridTemplateColumns = `21px ${COLUMNS.map(([, width]) => `${width}px`).join(" ")}`;
  const gridTemplateRows = `14px ${ROWS.map((height) => `${height}px`).join(" ")}`;

  return (
    <main className="min-h-0 flex-1 overflow-hidden bg-white">
      <div className="grid text-[10px] text-[#1c1c1c]" style={{ gridTemplateColumns, gridTemplateRows }}>
        <div className="flex items-end justify-end border-b border-r border-[#a8a8a8] bg-[#d9dadb] p-0.5">
          <span className="size-2 bg-[#8b8d90] [clip-path:polygon(100%_0,100%_100%,0_100%)]" />
        </div>
        {COLUMNS.map(([name]) => (
          <div
            key={name}
            className={`border-b border-r text-center text-[11px] leading-[13px] text-[#3c3c3c] ${
              name === "A" ? "border-[#c98f3e] bg-linear-to-b from-[#fbd495] to-[#f0b350]" : "border-[#b5b5b5] bg-linear-to-b from-[#f3f3f3] to-[#d2d2d2]"
            }`}
          >
            {name}
          </div>
        ))}
        {ROWS.map((_, i) => (
          <div
            key={i}
            style={{ gridRow: i + 2 }}
            className={`col-start-1 flex items-end justify-center border-b border-r leading-3 text-[#3c3c3c] ${
              i === 2 ? "border-[#c98f3e] bg-[#f7c373]" : "border-[#bdbdbd] bg-[#e9e9e9]"
            }`}
          >
            {i + 1}
          </div>
        ))}
        <PaymentForm />
        <Instructions />
      </div>
    </main>
  );
};

const NAV = [
  { label: "First sheet", d: "M1 1v6M7 1L3 4l4 3z" },
  { label: "Previous sheet", d: "M6 1L2 4l4 3z" },
  { label: "Next sheet", d: "M2 1l4 3-4 3z" },
  { label: "Last sheet", d: "M7 1v6M1 1l4 3-4 3z" },
];

const SheetTabs = () => (
  <footer className="flex h-[13px] shrink-0 items-stretch border-t border-[#555] bg-linear-to-b from-[#6a6a6a] to-[#7c7c7c] text-[10px] leading-3">
    <div className="flex w-[50px] items-center justify-around bg-linear-to-b from-[#e0e3e7] to-[#b9bec6]">
      {NAV.map(({ label, d }) => (
        <button key={label} aria-label={label}>
          <svg viewBox="0 0 8 8" className="size-[7px]" aria-hidden="true"><path d={d} fill="#222" stroke="#222" strokeWidth=".6" /></svg>
        </button>
      ))}
    </div>
    <button className="w-[134px] bg-linear-to-b from-white via-[#fffff0] via-60% to-[#f2f27a] font-bold text-black [clip-path:polygon(0_0,100%_0,95%_100%,0_100%)]">
      Application for Payment
    </button>
    <button className="w-[112px] bg-linear-to-b from-[#f2a3a3] via-[#e02a2a] to-[#f06060] text-[#ffe3e3] [clip-path:polygon(7%_0,100%_0,94%_100%,0_100%)]">
      Continuation Sheet
    </button>
    <button aria-label="Insert Worksheet" className="flex w-[30px] items-center justify-center bg-linear-to-b from-[#c9ced5] to-[#a8b0bb] [clip-path:polygon(18%_0,100%_0,70%_100%,0_100%)]">
      <svg viewBox="0 0 12 10" className="h-2.5 w-3" aria-hidden="true">
        <path d="M3.500 2.500h7v6h-7z" fill="#fff" stroke="#5d7199" />
        <circle cx="3" cy="3" r="2" fill="#f0b63e" />
      </svg>
    </button>
    <div className="flex-1" />
    <div className="flex w-1/3 bg-linear-to-b from-[#d5d6d8] to-[#f1f1f1]">
      <span className="w-1.5 border-r border-[#888] bg-[#e8e8e8]" />
      <button aria-label="Scroll left" className="flex w-3.5 items-center justify-center bg-[#4d4d4d]">
        <svg viewBox="0 0 6 8" className="h-2 w-1.5" aria-hidden="true"><path d="M5 0v8L1 4z" fill="#ddd" /></svg>
      </button>
      <div className="flex flex-1 items-center justify-center gap-px pl-24">
        <span className="h-1.5 w-px bg-[#888]" />
        <span className="h-1.5 w-px bg-[#888]" />
        <span className="h-1.5 w-px bg-[#888]" />
      </div>
    </div>
  </footer>
);

const App = () => {
  return (
    <div className="flex h-screen flex-col overflow-hidden bg-white font-['Liberation_Sans',Arial,sans-serif]">
      <Ribbon />
      <FormulaBar />
      <Sheet />
      <SheetTabs />
    </div>
  );
};

export default App;
